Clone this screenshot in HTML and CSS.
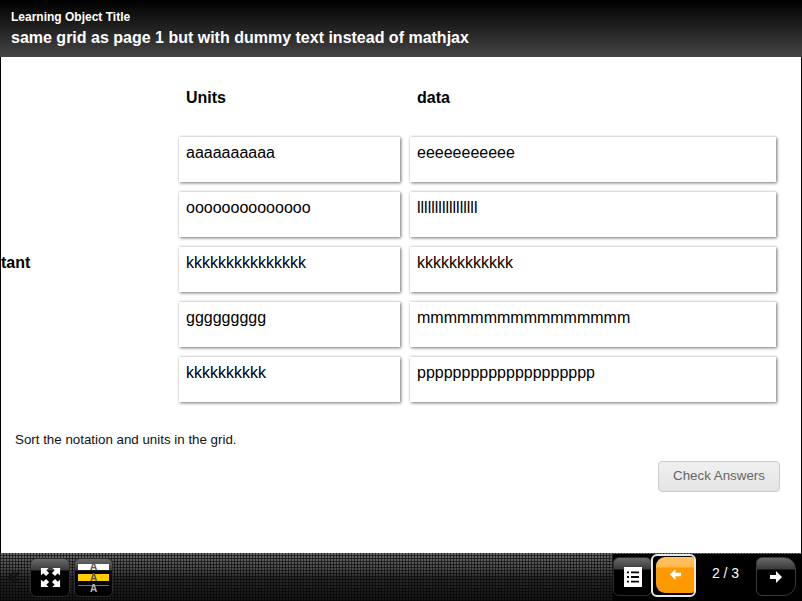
FILE: index.html
```html
<!DOCTYPE html>
<html lang="en">
<head>
<meta charset="utf-8">
<title>Learning Object</title>
<link rel="stylesheet" href="styles.css">
</head>
<body>
<div class="frame">
  <header class="top">
    <div class="lo-title">Learning Object Title</div>
    <h1 class="page-title">same grid as page 1 but with dummy text instead of mathjax</h1>
  </header>
  <main class="content">
    <div class="grid">
      <div></div>
      <div class="head">Units</div>
      <div class="head">data</div>

      <div></div>
      <div class="card">aaaaaaaaaa</div>
      <div class="card">eeeeeeeeeee</div>

      <div></div>
      <div class="card">oooooooooooooo</div>
      <div class="card">lllllllllllllllll</div>

      <div class="label">tant</div>
      <div class="card">kkkkkkkkkkkkkkk</div>
      <div class="card">kkkkkkkkkkkk</div>

      <div></div>
      <div class="card">ggggggggg</div>
      <div class="card">mmmmmmmmmmmmmmmm</div>

      <div></div>
      <div class="card">kkkkkkkkkk</div>
      <div class="card">pppppppppppppppppppp</div>
    </div>
    <p class="hint">Sort the notation and units in the grid.</p>
    <div class="actions"><button class="check" type="button">Check Answers</button></div>
  </main>
  <footer class="bar">
    <div class="group-left">
      <svg class="chev" width="14" height="14" viewBox="0 0 14 14" aria-hidden="true"><path d="M7 2 2 7l5 5M12 2 7 7l5 5" fill="none" stroke="#111" stroke-width="2"/></svg>
      <button class="tool" type="button" aria-label="Full screen">
        <svg class="glyph" width="23" height="23" viewBox="0 0 24 24" aria-hidden="true">
          <path fill="#fff" d="M2 2h8L7.600 4.400 10.500 7.300 7.300 10.500 4.400 7.600 2 10zM22 2v8l-2.400-2.400-2.900 2.900-3.200-3.200 2.900-2.900L14 2zM2 22v-8l2.400 2.400 2.900-2.900 3.200 3.200-2.900 2.900L10 22zM22 22h-8l2.400-2.400-2.900-2.900 3.200-3.200 2.900 2.900L22 14z"/>
        </svg>
      </button>
      <button class="tool narrow" type="button" aria-label="Text contrast">
        <span class="stripes">
          <span class="stripe s-white">A</span>
          <span class="stripe s-yellow">A</span>
          <span class="stripe s-black">A</span>
        </span>
      </button>
    </div>
    <div class="group-right">
      <button class="tool narrow" type="button" aria-label="Contents">
        <svg class="glyph" width="18" height="20" viewBox="0 0 18 22" preserveAspectRatio="none" aria-hidden="true">
          <path fill="#fff" fill-rule="evenodd" d="M0 0h18v22H0zM3 5v2h2V5zM7 5v2h8V5zM3 10v2h2v-2zM7 10v2h8v-2zM3 15v2h2v-2zM7 15v2h8v-2z"/>
        </svg>
      </button>
      <button class="prev" type="button" aria-label="Previous">
        <span class="prev-face">
          <svg class="glyph" width="13" height="13" viewBox="0 0 14 14" aria-hidden="true"><path fill="#fff" d="M7 1v4h6v4H7v4L1 7z"/></svg>
        </span>
      </button>
      <span class="pager">2 / 3</span>
      <button class="tool next" type="button" aria-label="Next">
        <svg class="glyph" width="14" height="14" viewBox="0 0 14 14" aria-hidden="true"><path fill="#fff" d="M7 1v4H1v4h6v4l6-6z"/></svg>
      </button>
    </div>
  </footer>
</div>
</body>
</html>
```
FILE: styles.css
```css
* { box-sizing: border-box; }
html, body { margin: 0; padding: 0; }
body {
  width: 802px;
  height: 601px;
  overflow: hidden;
  background: #fff;
  font-family: "Liberation Sans", Arial, sans-serif;
  color: #000;
}
.frame {
  width: 802px;
  height: 601px;
  display: flex;
  flex-direction: column;
}
.top {
  height: 57px;
  padding: 10px 11px 0;
  background: linear-gradient(#000, #444);
  color: #fff;
}
.lo-title { font-size: 12px; font-weight: bold; line-height: 15px; }
.page-title { margin: 4px 0 0; font-size: 16px; font-weight: bold; line-height: 18px; }
.content {
  flex: 1;
  padding-top: 30px;
  border-left: 1px solid #000;
  border-right: 1px solid #000;
}
.grid {
  display: grid;
  grid-template-columns: 168px 221px 366px;
  grid-template-rows: 40px repeat(5, 45px);
  column-gap: 10px;
  row-gap: 10px;
}
.head { padding: 2px 7px 0; font-size: 16px; font-weight: bold; line-height: 18px; }
.label { padding-top: 7px; font-size: 16px; font-weight: bold; line-height: 18px; }
.card {
  padding: 7px 7px 0;
  font-size: 16px;
  line-height: 18px;
  background: #fff;
  box-shadow: 1px 1px 3px rgba(0, 0, 0, .55), 0 -1px 2px rgba(0, 0, 0, .08);
}
.hint { margin: 30px 0 0 14px; font-size: 13.33px; line-height: 16px; color: #111; }
.actions { display: flex; justify-content: flex-end; margin-top: 13px; padding-right: 21px; }
.check {
  width: 122px;
  height: 31px;
  padding: 0 0 2px;
  font: 13.33px "Liberation Sans", Arial, sans-serif;
  color: #666;
  border: 1px solid #ccc;
  border-radius: 4px;
  background: linear-gradient(#f0f0f0, #e4e4e4);
}
.bar {
  height: 48px;
  flex: none;
  display: flex;
  justify-content: space-between;
  background-image:
    repeating-linear-gradient(90deg, rgba(0, 0, 0, .55) 0 1px, transparent 1px 3px),
    repeating-linear-gradient(0deg, rgba(0, 0, 0, .55) 0 1px, transparent 1px 3px),
    linear-gradient(#666 0, #444 18px, #2a2a2a 24px, #141414 100%);
}
.group-left {
  display: flex;
  align-items: center;
  gap: 4px;
  padding-left: 7px;
}
.chev { margin-right: 5px; }
.tool {
  width: 40px;
  height: 39px;
  padding: 0;
  display: flex;
  align-items: center;
  justify-content: center;
  border: 1px solid #2c2c2c;
  border-radius: 6px;
  background: linear-gradient(#6a6a6a 0, #3a3a3a 11px, #000 12px);
}
.narrow { width: 39px; }
.glyph { display: block; }
.stripes {
  width: 31px;
  display: flex;
  flex-direction: column;
  gap: 4px;
}
.stripe {
  height: 6px;
  font: bold 10px/6px "Liberation Sans", Arial, sans-serif;
  text-align: center;
  color: #555;
}
.s-white { background: #fff; }
.s-yellow { background: #fc0; height: 7px; line-height: 7px; }
.s-black { background: #000; color: #bbb; border-top: 1px solid #777; }
.group-right {
  display: flex;
  align-items: flex-start;
  padding: 3px 6px 0 0;
  margin-top: 1px;
  background: #000;
}
.prev {
  width: 45px;
  height: 43px;
  margin: -3px 0 0 -1px;
  padding: 1px 0 2px 3px;
  display: flex;
  border: 2px solid #e8e8e8;
  border-radius: 6px;
  background: #000;
}
.prev-face {
  flex: 1;
  display: flex;
  align-items: center;
  justify-content: center;
  padding-bottom: 2px;
  border-radius: 9px 2px 2px 9px;
  background: linear-gradient(#ffc266 0, #ffb84d 10px, #ff9900 11px);
}
.pager {
  width: 60px;
  margin-top: 8px;
  padding-right: 1px;
  text-align: center;
  font-size: 14px;
  line-height: 16px;
  color: #fff;
}
.next { border-color: #3a3a3a; border-radius: 6px 12px 12px 6px; }
```
